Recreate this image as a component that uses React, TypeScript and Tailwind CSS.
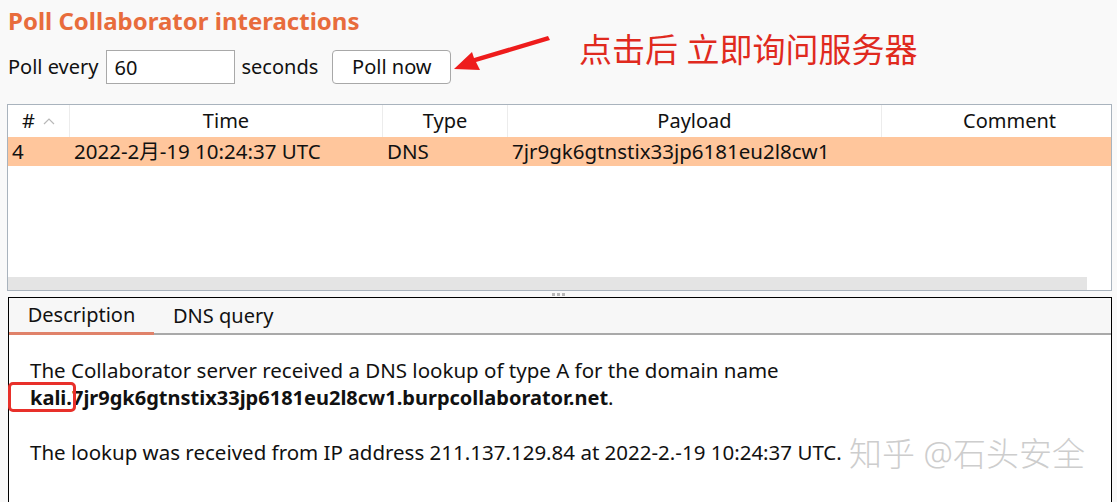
import React from "react";

const font = { fontFamily: '"Noto Sans", "Noto Sans CJK SC", sans-serif' };

const cols = ["w-[62px]", "w-[313px]", "w-[125px]", "w-[374px]", "flex-1"];

function HeaderCell({ label, idx, sort }: { label: string; idx: number; sort?: boolean }) {
  return (
    <div
      className={`${cols[idx]} h-full flex items-center justify-center gap-1 ${
        idx < 4 ? "border-r border-[#ececec]" : "pl-[26px]"
      }`}
    >
      <span>{label}</span>
      {sort && (
        <svg width="12" height="8" viewBox="0 0 12 8" className="ml-1">
          <path d="M1 7 L6 2 L11 7" stroke="#b8b8b8" strokeWidth="1.2" fill="none" />
        </svg>
      )}
    </div>
  );
}

export default function App() {
  return (
    <div
      className="relative w-[1117px] h-[502px] overflow-hidden bg-[#f9f9f9] text-[#111] text-[20px]"
      style={font}
    >
      {/* top controls */}
      <div className="pl-2 pt-[5px]">
        <h1 className="text-[24px] font-bold leading-[32px] text-[#e86c3c]">
          Poll Collaborator interactions
        </h1>
        <div className="flex items-center mt-[13px] h-[34px]">
          <span className="leading-none">Poll every</span>
          <input
            defaultValue="60"
            className="ml-[7px] w-[129px] h-[34px] border border-[#a9a9a9] bg-white px-2 outline-none text-[20px]"
            style={font}
          />
          <span className="ml-[7px] leading-none">seconds</span>
          <button className="ml-[14px] w-[119px] h-[34px] rounded-[4px] border border-[#a8a8a8] bg-white text-[20px]">
            Poll now
          </button>
        </div>
      </div>

      {/* table */}
      <div className="ml-[7px] mt-[20px] w-[1105px] h-[187px] border border-[#a9b3bd] bg-white flex flex-col">
        <div className="flex h-[32px] bg-white">
          <HeaderCell label="#" idx={0} sort />
          <HeaderCell label="Time" idx={1} />
          <HeaderCell label="Type" idx={2} />
          <HeaderCell label="Payload" idx={3} />
          <HeaderCell label="Comment" idx={4} />
        </div>
        <div className="flex h-[29px] items-center bg-[#ffc69c] text-[20.5px]">
          <div className={`${cols[0]} pl-1`}>4</div>
          <div className={`${cols[1]} pl-[4px]`}>2022-2月-19 10:24:37 UTC</div>
          <div className={`${cols[2]} pl-[4px]`}>DNS</div>
          <div className={`${cols[3]} pl-[4px]`}>7jr9gk6gtnstix33jp6181eu2l8cw1</div>
          <div className={cols[4]}></div>
        </div>
        <div className="flex-1"></div>
        <div className="h-[13px] flex">
          <div className="w-[1079px] bg-[#e4e4e4]"></div>
        </div>
      </div>

      {/* splitter */}
      <div className="h-[6px] flex items-center justify-center gap-[2px]">
        <span className="w-[3px] h-[3px] bg-[#b8b8b8]"></span>
        <span className="w-[3px] h-[3px] bg-[#b8b8b8]"></span>
        <span className="w-[3px] h-[3px] bg-[#b8b8b8]"></span>
      </div>

      {/* details panel */}
      <div className="ml-[8px] w-[1104px] h-[210px] border border-black bg-white">
        <div className="flex h-[37px] bg-[#f7f7f7] border-b-2 border-[#a9a9a9]">
          <div className="w-[145px] flex items-center justify-center border-b-[3px] border-[#e0826a] -mb-[2px]">
            Description
          </div>
          <div className="pl-[19px] flex items-center">DNS query</div>
        </div>
        <div className="pl-[21px] pt-[22px] leading-[27px] text-[20.5px]">
          <p>The Collaborator server received a DNS lookup of type A for the domain name</p>
          <p>
            <b className="text-[20px]">kali.7jr9gk6gtnstix33jp6181eu2l8cw1.burpcollaborator.net</b>.
          </p>
          <p className="mt-[28px]">
            The lookup was received from IP address 211.137.129.84 at 2022-2.-19 10:24:37 UTC.
          </p>
        </div>
      </div>

      {/* annotations */}
      <svg className="absolute left-[450px] top-[32px]" width="104" height="44" viewBox="0 0 104 44">
        <polygon points="98,4 100,8 26,30 30,38 4,37 22,20 24,26" fill="#ee1c1c" />
      </svg>
      <div className="absolute left-[579px] top-[28px] text-[33px] text-[#e02a1e] leading-[44px]">
        点击后 立即询问服务器
      </div>
      <div className="absolute left-[8px] top-[382px] w-[68px] h-[30px] border-[3px] border-[#e8302a] rounded-[5px]"></div>
      <div className="absolute left-[849px] top-[434px] text-[33px] font-light text-[#cdcdcd] leading-[40px]">
        知乎 @石头安全
      </div>
    </div>
  );
}
